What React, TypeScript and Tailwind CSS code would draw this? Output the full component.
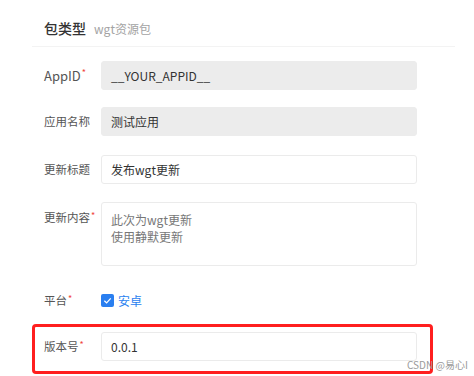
const font = { fontFamily: '"Noto Sans CJK SC", "Noto Sans", sans-serif' };

function Label({ text, required, latin }: { text: string; required?: boolean; latin?: boolean }) {
  return (
    <div
      className={`w-[57px] shrink-0 text-[#555] leading-none whitespace-nowrap ${latin ? 'text-[13px]' : 'text-[11.5px]'}`}
    >
      {text}
      {required && <span className="text-[#f0463c] text-[9px] align-top relative -top-[1px] ml-[1px]">*</span>}
    </div>
  );
}

function Field({ value, disabled }: { value: string; disabled?: boolean }) {
  return (
    <div
      className={`w-[316px] h-[29px] rounded-[3px] flex items-center px-[9px] text-[12px] text-[#333] border ${
        disabled ? 'bg-[#ececec] border-[#ececec]' : 'bg-white border-[#ebebeb]'
      }`}
    >
      {value}
    </div>
  );
}

export default function App() {
  return (
    <div className="relative w-[474px] h-[376px] bg-white overflow-hidden" style={font}>
      <div className="px-[32px]">
        <div className="flex items-baseline gap-[8px] pl-[12px] pt-[18px] h-[47px] border-b border-[#f3f3f3] w-[423px]">
          <span className="text-[14px] font-medium text-[#333]">包类型</span>
          <span className="text-[12px] text-[#a3a3a3]">wgt资源包</span>
        </div>

        <div className="pl-[12px] flex flex-col">
          <div className="flex items-center mt-[14px]">
            <Label text="AppID" required latin />
            <Field value="__YOUR_APPID__" disabled />
          </div>
          <div className="flex items-center mt-[17px]">
            <Label text="应用名称" />
            <Field value="测试应用" disabled />
          </div>
          <div className="flex items-center mt-[19px]">
            <Label text="更新标题" />
            <Field value="发布wgt更新" />
          </div>
          <div className="flex items-start mt-[18px]">
            <div className="pt-[10px]">
              <Label text="更新内容" required />
            </div>
            <div className="w-[316px] h-[64px] rounded-[3px] border border-[#ebebeb] px-[9px] pt-[8px] text-[12px] leading-[17px] text-[#777]">
              <div>此次为wgt更新</div>
              <div>使用静默更新</div>
            </div>
          </div>
          <div className="flex items-center h-[29px] mt-[20px]">
            <Label text="平台" required />
            <div className="flex items-center gap-[4px]">
              <span className="w-[13px] h-[13px] rounded-[2px] bg-[#2a7ff0] flex items-center justify-center">
                <svg width="9" height="9" viewBox="0 0 10 10" fill="none">
                  <path d="M1.5 5.2 L4 7.6 L8.6 2.6" stroke="white" strokeWidth="1.4" />
                </svg>
              </span>
              <span className="text-[12px] text-[#2a7ff0]">安卓</span>
            </div>
          </div>
        </div>

        <div className="mt-[9px] w-[401px] h-[50px] border-[3px] border-[#ff1f1f] rounded-[4px] pl-[9px] pt-[5px]">
          <div className="flex items-center">
            <Label text="版本号" required />
            <Field value="0.0.1" />
          </div>
        </div>
      </div>

      <div className="absolute left-[407px] top-[360px] text-[10px] text-[#9a9a9a] leading-none">CSDN @易心I</div>
    </div>
  );
}
